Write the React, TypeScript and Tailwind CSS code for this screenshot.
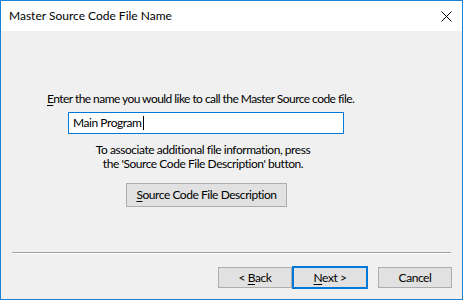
import React from "react";

const font = { fontFamily: 'Lato, "Segoe UI", sans-serif' };

function U({ children }: { children: React.ReactNode }) {
  return <span className="underline underline-offset-2 decoration-1">{children}</span>;
}

export default function App() {
  return (
    <div
      className="w-[463px] h-[300px] border border-[#1883d7] bg-[#f0f0f0] flex flex-col text-[12px] text-black overflow-hidden whitespace-nowrap"
      style={font}
    >
      <div className="h-[30px] bg-white flex items-center justify-between pl-[8px] pr-[9px] shrink-0">
        <span className="text-[12px] leading-[16px] text-black">Master Source Code File Name</span>
        <svg width="11" height="11" viewBox="0 0 11 11" className="mr-[1px]">
          <path d="M0.5 0.5 L10.5 10.5 M10.5 0.5 L0.5 10.5" stroke="#000" strokeWidth="1" />
        </svg>
      </div>
      <div className="flex-1 flex flex-col tracking-[-0.45px]">
        <div className="mt-[60px] ml-[46px] leading-[16px] tracking-[-0.55px]">
          <U>E</U>nter the name you would like to call the Master Source code file.
        </div>
        <div className="mt-[5px] ml-[67px] w-[276px] h-[22px] bg-white border border-[#0078d7] flex items-center pl-[4px] leading-[16px]">
          Main Program<span className="inline-block w-[1px] h-[14px] bg-black ml-[1px]" />
        </div>
        <div className="mt-[9px] ml-[52px] w-[300px] text-center leading-[14px]">
          <div>To associate additional file information, press</div>
          <div>the 'Source Code File Description' button.</div>
        </div>
        <div className="mt-[12px] ml-[125px] w-[161px] h-[24px] bg-[#e1e1e1] border border-[#adadad] flex items-center justify-center leading-[16px]">
          <span><U>S</U>ource Code File Description</span>
        </div>
        <div className="mt-[45px] mx-[11px] h-[2px] flex flex-col">
          <div className="h-[1px] bg-[#a0a0a0]" />
          <div className="h-[1px] bg-white" />
        </div>
        <div className="mt-[12px] flex items-center pl-[217px] h-[23px] leading-[16px]">
          <div className="w-[74px] h-[21px] bg-[#e1e1e1] border border-[#adadad] flex items-center justify-center">
            <span>&lt; <U>B</U>ack</span>
          </div>
          <div className="ml-[0px] w-[76px] h-[23px] bg-[#e1e1e1] border-2 border-[#0078d7] flex items-center justify-center">
            <span><U>N</U>ext &gt;</span>
          </div>
          <div className="ml-[10px] w-[74px] h-[21px] bg-[#e1e1e1] border border-[#adadad] flex items-center justify-center">
            <span>Cancel</span>
          </div>
        </div>
      </div>
    </div>
  );
}
